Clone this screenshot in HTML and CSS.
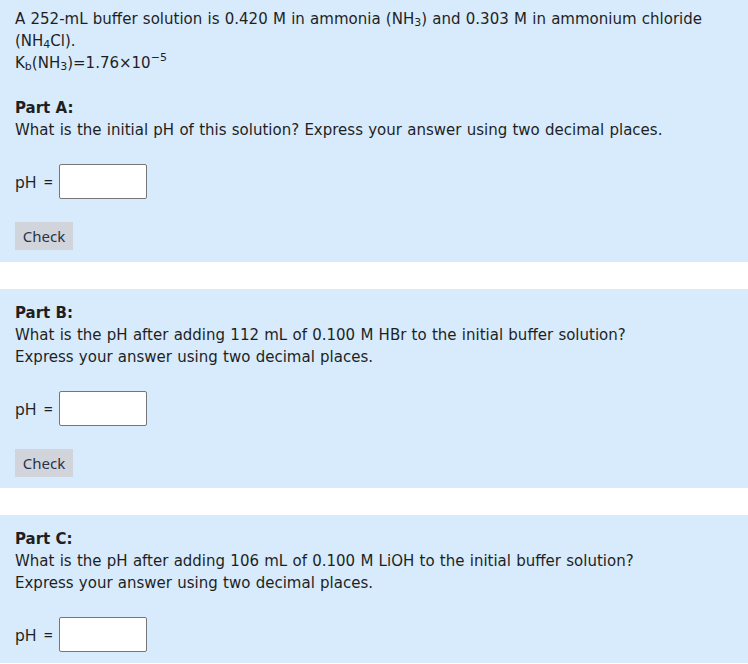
FILE: index.html
```html
<!DOCTYPE html>
<html>
<head>
<meta charset="utf-8">
<link rel="stylesheet" href="styles.css">
</head>
<body>
<div class="page">
  <section class="panel panel-first">
    <p class="text">A 252-mL buffer solution is 0.420 M in ammonia (NH<sub>3</sub>) and 0.303 M in ammonium chloride<br>(NH<sub>4</sub>Cl).<br>K<sub>b</sub>(NH<sub>3</sub>)=1.76×10<sup>−5</sup></p>
    <p class="part part-spaced">Part A:</p>
    <p class="text">What is the initial pH of this solution? Express your answer using two decimal places.</p>
    <div class="answer"><span class="label">pH =</span><input class="field" type="text"></div>
    <button class="check">Check</button>
  </section>
  <section class="panel">
    <p class="part">Part B:</p>
    <p class="text">What is the pH after adding 112 mL of 0.100 M HBr to the initial buffer solution?<br>Express your answer using two decimal places.</p>
    <div class="answer"><span class="label">pH =</span><input class="field" type="text"></div>
    <button class="check">Check</button>
  </section>
  <section class="panel">
    <p class="part">Part C:</p>
    <p class="text">What is the pH after adding 106 mL of 0.100 M LiOH to the initial buffer solution?<br>Express your answer using two decimal places.</p>
    <div class="answer"><span class="label">pH =</span><input class="field" type="text"></div>
  </section>
</div>
</body>
</html>
```
FILE: styles.css
```css
html, body {
  margin: 0;
  padding: 0;
  background: #ffffff;
}
body {
  font-family: "DejaVu Sans", Verdana, sans-serif;
  font-size: 15px;
  line-height: 22px;
  color: #1f1f1f;
}
.page {
  display: flex;
  flex-direction: column;
  gap: 27px;
}
.panel {
  background: #d7ebfc;
  padding: 13px 15px 11px;
  display: flex;
  flex-direction: column;
  align-items: flex-start;
}
.panel-first {
  padding-top: 8px;
  padding-bottom: 12px;
}
.text, .part {
  margin: 0;
}
.text {
  word-spacing: 0.5px;
}
.part {
  font-weight: bold;
}
.part-spaced {
  margin-top: 23px;
}
sub, sup {
  font-size: 11px;
  line-height: 0;
}
sub { vertical-align: -2px; }
sup { vertical-align: 7px; }
.answer {
  margin-top: 23px;
  display: flex;
  align-items: center;
  gap: 6px;
}
.label {
  font-family: "Noto Sans", "Open Sans", sans-serif;
  font-size: 16px;
  word-spacing: 3px;
  color: #1f1f1f;
}
.field {
  box-sizing: border-box;
  width: 88px;
  height: 35px;
  border: 1px solid #767676;
  border-radius: 2px;
  background: #fff;
  margin: 0;
  padding: 0 4px;
}
.check {
  margin-top: 23px;
  width: 58px;
  height: 28px;
  border: none;
  border-radius: 0;
  background: #d1d5db;
  color: #26334a;
  font-family: "Noto Sans", "Open Sans", sans-serif;
  font-size: 15px;
  padding: 0;
}
```
